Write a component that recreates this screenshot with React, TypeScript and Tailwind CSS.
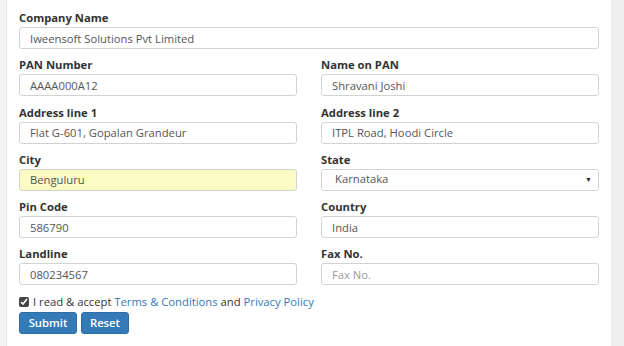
import React from 'react';

type FieldProps = {
  label: string;
  value?: string;
  placeholder?: string;
  highlight?: boolean;
};

const Field: React.FC<FieldProps> = ({ label, value, placeholder, highlight }) => (
  <div className="flex flex-col">
    <label className="text-[11.25px] leading-[15px] font-bold text-[#333] mb-[2px]">{label}</label>
    <input
      readOnly
      value={value ?? ''}
      placeholder={placeholder}
      className={`h-[22px] w-full rounded-[3px] border border-[#d2d2d2] px-[10px] text-[11.25px] text-[#555] placeholder:text-[#999] outline-none ${
        highlight ? 'bg-[#fafcc3]' : 'bg-white'
      }`}
    />
  </div>
);

const SelectField: React.FC<{ label: string; value: string }> = ({ label, value }) => (
  <div className="flex flex-col">
    <label className="text-[11.25px] leading-[15px] font-bold text-[#333] mb-[2px]">{label}</label>
    <div className="h-[22px] w-full rounded-[3px] border border-[#d2d2d2] bg-white pl-[13px] pr-[6px] flex items-center justify-between text-[11.25px] text-[#555]">
      <span>{value}</span>
      <span className="text-[7px] text-[#333]">▼</span>
    </div>
  </div>
);

export default function App() {
  return (
    <div
      className="w-[624px] h-[346px] flex bg-white overflow-hidden"
      style={{ fontFamily: '"Open Sans", "Noto Sans", sans-serif' }}
    >
      {/* left gutter */}
      <div className="w-[7px] bg-[#f3f3f3] border-r border-[#e6e6e6]" />

      <div className="flex-1 pl-[12px] pr-[12px] pt-[10px]">
        <div className="flex flex-col gap-y-[8.3px]">
          <Field label="Company Name" value="Iweensoft Solutions Pvt Limited" />

          <div className="grid grid-cols-2 gap-x-[24px] gap-y-[8.3px]">
            <Field label="PAN Number" value="AAAA000A12" />
            <Field label="Name on PAN" value="Shravani Joshi" />
            <Field label="Address line 1" value="Flat G-601, Gopalan Grandeur" />
            <Field label="Address line 2" value="ITPL Road, Hoodi Circle" />
            <Field label="City" value="Benguluru" highlight />
            <SelectField label="State" value="Karnataka" />
            <Field label="Pin Code" value="586790" />
            <Field label="Country" value="India" />
            <Field label="Landline" value="080234567" />
            <Field label="Fax No." placeholder="Fax No." />
          </div>
        </div>

        <div className="mt-[9px] flex items-center text-[11.25px] leading-[15px] text-[#333]">
          <input type="checkbox" defaultChecked className="w-[10px] h-[10px] mr-[4px] accent-[#444]" />
          <span>
            I read &amp; accept <a className="text-[#337ab7]">Terms &amp; Conditions</a> and{' '}
            <a className="text-[#337ab7]">Privacy Policy</a>
          </span>
        </div>

        <div className="mt-[3px] flex gap-[4px]">
          <button className="h-[22px] w-[58px] rounded-[3px] bg-[#337ab7] border border-[#2e6da4] text-white text-[11.25px] font-semibold">
            Submit
          </button>
          <button className="h-[22px] w-[48px] rounded-[3px] bg-[#337ab7] border border-[#2e6da4] text-white text-[11.25px] font-semibold">
            Reset
          </button>
        </div>
      </div>

      {/* right gutter */}
      <div className="w-[13px] bg-[#efefef]" />
    </div>
  );
}
